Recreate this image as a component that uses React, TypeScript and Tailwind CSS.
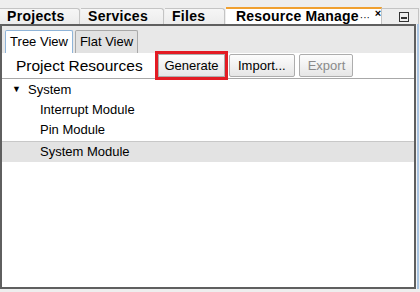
import React from "react";

// Top-level view tabs of the IDE window
const topTabs = [
    { label: "Projects", width: "w-[80px]" },
    { label: "Services", width: "w-[83px]" },
    { label: "Files", width: "w-[60px]" },
];

const treeRows = [
    { label: "Interrupt Module" },
    { label: "Pin Module" },
];

function ToolButton({ label, disabled, highlight }: { label: string; disabled?: boolean; highlight?: boolean }) {
    return (
        <button
            className={
                "h-[23px] border border-[#adadad] bg-gradient-to-b from-[#fdfdfd] to-[#e6e6e6] text-[13px] leading-none " +
                (disabled ? "text-[#8a8a8a] w-[54px] " : "text-black ") +
                (highlight
                    ? "rounded-none outline-[3px] outline-solid outline-[#e31b23] outline-offset-[0px] w-[67px]"
                    : "rounded-[2px] px-[8px]")
            }
        >
            {label}
        </button>
    );
}

export default function App() {
    return (
        <div className="w-[420px] h-[292px] bg-[#eeeeee] flex flex-col font-['Liberation_Sans',Arial,sans-serif] overflow-hidden">
            {/* top tab strip */}
            <div className="h-[24px] flex items-end shrink-0">
                {topTabs.map((tab) => (
                    <div
                        key={tab.label}
                        className={`${tab.width} shrink-0 h-[16px] mr-[1px] bg-gradient-to-b from-[#f6f6f6] to-[#ececec] border-t border-r border-[#c4c4c4] rounded-tr-[3px] flex items-end pl-[7px] text-[14px] font-bold leading-none pb-[1px] tracking-[0.3px] whitespace-nowrap`}
                    >
                        {tab.label}
                    </div>
                ))}
                <div className="w-[156px] shrink-0 h-[17px] bg-white border-t-2 border-[#f0a030] border-r border-r-[#c4c4c4] flex items-end pl-[10px] pb-[1px] text-[14px] font-bold leading-none whitespace-nowrap overflow-hidden">
                    <span className="tracking-[0.2px]">Resource Manage</span>
                    <span className="ml-[1px] text-[10px] font-normal">···</span>
                    <span className="ml-[5px] mb-[4px] text-[11px] leading-none">×</span>
                </div>
                <div className="w-[37px] shrink-0 h-[16px] border-t border-r border-[#c4c4c4] flex items-center justify-end pr-[9px]">
                    <div className="w-[10px] h-[10px] border border-[#333] flex items-end justify-center pb-[2px]">
                        <div className="w-[6px] h-[2px] bg-[#333]" />
                    </div>
                </div>
            </div>

            <div className="h-[265px] flex shrink-0">
                {/* main panel */}
                <div className="w-[416px] border-2 border-[#5f5f5f] flex flex-col">
                    {/* sub tabs */}
                    <div className="h-[27px] bg-[#e8e8e8] flex items-end pl-[3px] gap-[2px] shrink-0">
                        <div className="w-[68px] h-[23px] bg-white border border-b-0 border-[#8fb4d8] rounded-t-[2px] flex items-center justify-center text-[13px]">
                            Tree View
                        </div>
                        <div className="w-[63px] h-[23px] bg-[#e2e2e2] border border-b-0 border-[#a8a8a8] rounded-t-[2px] flex items-center justify-center text-[13px]">
                            Flat View
                        </div>
                    </div>

                    <div className="flex-1 bg-white flex flex-col">
                        {/* toolbar */}
                        <div className="h-[26px] flex items-center border-b border-[#a8a8a8] shrink-0">
                            <span className="pl-[14px] text-[15.5px] w-[156px] whitespace-nowrap">Project Resources</span>
                            <div className="flex items-center gap-[4px]">
                                <ToolButton label="Generate" highlight />
                                <ToolButton label="Import..." />
                                <ToolButton label="Export" disabled />
                            </div>
                        </div>

                        {/* tree */}
                        <div className="flex flex-col text-[13px]">
                            <div className="h-[21px] flex items-center pl-[10px]">
                                <span className="text-[9px] w-[16px]">▼</span>
                                <span>System</span>
                            </div>
                            {treeRows.map((row) => (
                                <div key={row.label} className="h-[20px] flex items-center pl-[38px]">
                                    {row.label}
                                </div>
                            ))}
                            <div className="h-[21px] mt-[1px] flex items-center pl-[38px] bg-[#e3e3e3] border-t border-[#c8c8c8]">
                                System Module
                            </div>
                        </div>
                    </div>
                </div>
                <div className="w-[1px] bg-[#f4f4f4]" />
                <div className="w-[2px] bg-[#a9c3e0]" />
            </div>
        </div>
    );
}
